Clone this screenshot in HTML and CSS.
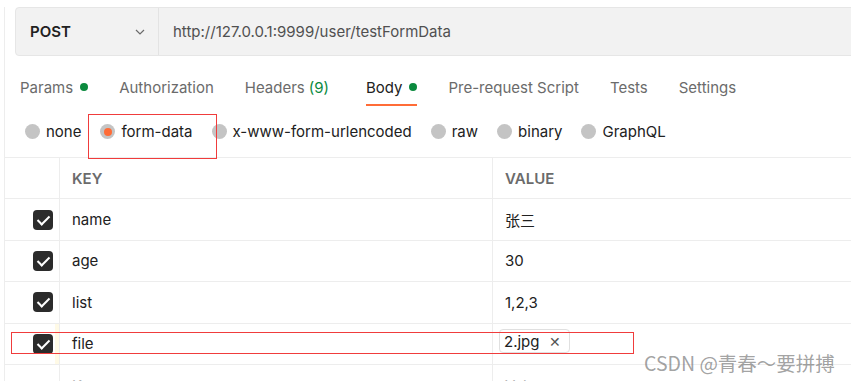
FILE: index.html
```html
<!DOCTYPE html>
<html>
    <head>
        <title>
            testFormData
        </title>
        <link rel="stylesheet" href="styles.css">
    </head>
    <body>
        <div class="page">
            <div class="url-bar">
                <div class="method">
                    <span>POST</span>
                    <svg class="chevron" width="12" height="12" viewBox="0 0 12 12">
                        <path d="M2 4 L6 8 L10 4" fill="none" stroke="#6b6b6b" stroke-width="1.2"/>
                    </svg>
                </div>
                <div class="url">http://127.0.0.1:9999/user/testFormData</div>
            </div>

            <div class="tabs">
                <div class="tab">Params <span class="dot"></span></div>
                <div class="tab">Authorization</div>
                <div class="tab headers">Headers <span class="count">(9)</span></div>
                <div class="tab active">Body <span class="dot"></span></div>
                <div class="tab">Pre-request Script</div>
                <div class="tab">Tests</div>
                <div class="tab">Settings</div>
            </div>

            <div class="body-types">
                <label class="radio"><span class="circle"></span>none</label>
                <label class="radio checked"><span class="circle"></span>form-data</label>
                <label class="radio"><span class="circle"></span>x-www-form-urlencoded</label>
                <label class="radio"><span class="circle"></span>raw</label>
                <label class="radio"><span class="circle"></span>binary</label>
                <label class="radio"><span class="circle"></span>GraphQL</label>
            </div>

            <div class="table">
                <div class="row head">
                    <div class="cell check"></div>
                    <div class="cell key">KEY</div>
                    <div class="cell value">VALUE</div>
                </div>
                <div class="row">
                    <div class="cell check"><span class="box"></span></div>
                    <div class="cell key">name</div>
                    <div class="cell value">张三</div>
                </div>
                <div class="row">
                    <div class="cell check"><span class="box"></span></div>
                    <div class="cell key">age</div>
                    <div class="cell value">30</div>
                </div>
                <div class="row">
                    <div class="cell check"><span class="box"></span></div>
                    <div class="cell key">list</div>
                    <div class="cell value">1,2,3</div>
                </div>
                <div class="row">
                    <div class="cell check drag"><span class="box"></span></div>
                    <div class="cell key">file</div>
                    <div class="cell value file-cell">
                        <span class="chip">2.jpg <span class="close">✕</span></span>
                    </div>
                </div>
                <div class="row empty">
                    <div class="cell check"></div>
                    <div class="cell key">Key</div>
                    <div class="cell value">Value</div>
                </div>
            </div>
        </div>

        <div class="mark mark-radio"></div>
        <div class="mark mark-file"></div>
        <div class="watermark">CSDN @青春～要拼搏</div>
    </body>
</html>
```

FILE: styles.css
```css
body {
    margin: 0;
    background-color: white;
    font-family: Inter, "Noto Sans", "Noto Sans CJK SC", sans-serif;
    font-size: 15px;
    color: #212121;
    overflow: hidden;
    height: 381px;
}
.page {
    margin-left: 4px;
    border-left: 1px solid #ededed;
    height: 381px;
}
.url-bar {
    display: flex;
    margin-left: 10px;
    margin-top: 7px;
    width: 900px;
    height: 47px;
    background-color: #f2f2f2;
    border: 1px solid #e6e6e6;
    border-radius: 4px;
}
.method {
    display: flex;
    align-items: center;
    justify-content: space-between;
    width: 143px;
    padding: 0 12px 0 14px;
    box-sizing: border-box;
    border-right: 1px solid #e3e3e3;
    font-weight: 600;
    color: #212121;
}
.url {
    display: flex;
    align-items: center;
    padding-left: 14px;
    color: #505050;
}
.tabs {
    display: flex;
    margin-top: 14px;
    padding-left: 15px;
    height: 36px;
}
.tab {
    display: flex;
    align-items: center;
    margin-right: 31px;
    height: 34px;
    color: #6b6b6b;
    border-bottom: 2px solid transparent;
    white-space: nowrap;
}
.tab.headers {
    margin-right: 37px;
}
.tab.active {
    color: #212121;
    border-bottom-color: #ff6c37;
}
.dot {
    width: 8px;
    height: 8px;
    border-radius: 50%;
    background-color: #0b8a3e;
    margin-left: 7px;
}
.count {
    color: #0b8a3e;
    margin-left: 4px;
}
.body-types {
    display: flex;
    align-items: center;
    height: 51px;
    padding-left: 20px;
}
.radio {
    display: flex;
    align-items: center;
    margin-right: 19px;
    color: #212121;
    white-space: nowrap;
}
.circle {
    width: 15px;
    height: 15px;
    border-radius: 50%;
    background-color: #c4c4c4;
    margin-right: 6px;
    display: flex;
    align-items: center;
    justify-content: center;
}
.radio.checked .circle::after {
    content: "";
    width: 8px;
    height: 8px;
    border-radius: 50%;
    background-color: #ff6c37;
}
.table {
    border-top: 1px solid #ededed;
    width: 900px;
}
.row {
    display: flex;
    height: 41.4px;
    box-sizing: border-box;
    border-bottom: 1px solid #ededed;
}
.cell {
    display: flex;
    align-items: center;
    white-space: nowrap;
}
.check {
    width: 55px;
    justify-content: flex-end;
    padding-right: 6px;
    box-sizing: border-box;
    border-right: 1px solid #ededed;
}
.drag {
    box-shadow: inset -4px 0 0 #fffae6;
}
.key {
    width: 433px;
    padding-left: 12px;
    box-sizing: border-box;
    border-right: 1px solid #ededed;
}
.value {
    padding-left: 12px;
}
.head .cell {
    font-weight: 600;
    color: #6b6b6b;
}
.empty .cell {
    color: #b3b3b3;
}
.box {
    width: 20px;
    height: 20px;
    border-radius: 4px;
    background-color: #2b2b2b;
    position: relative;
}
.box::after {
    content: "";
    position: absolute;
    left: 7px;
    top: 3px;
    width: 5px;
    height: 10px;
    border-right: 2.5px solid white;
    border-bottom: 2.5px solid white;
    transform: rotate(45deg);
}
.file-cell {
    padding-left: 6px;
}
.chip {
    display: flex;
    align-items: center;
    height: 22px;
    padding: 0 8px 0 4px;
    border: 1px solid #e0e0e0;
    border-radius: 4px;
    margin-bottom: 5px;
}
.close {
    margin-left: 9px;
    font-size: 14px;
    font-weight: 300;
    color: #555;
}
.mark {
    position: absolute;
    border: 1px solid #f03c3c;
}
.mark-radio {
    left: 88px;
    top: 114px;
    width: 127px;
    height: 43px;
}
.mark-file {
    left: 11px;
    top: 332px;
    width: 621px;
    height: 20px;
}
.watermark {
    position: absolute;
    left: 644px;
    top: 348px;
    font-family: "Noto Sans CJK SC", sans-serif;
    font-size: 19.5px;
    color: rgba(110, 110, 110, 0.65);
    white-space: nowrap;
}
```
